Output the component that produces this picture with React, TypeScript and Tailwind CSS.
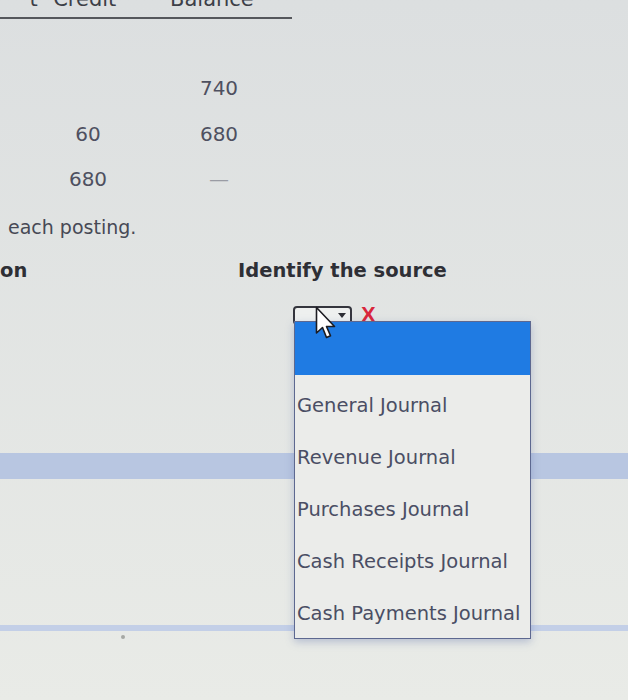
const options = [
  "General Journal",
  "Revenue Journal",
  "Purchases Journal",
  "Cash Receipts Journal",
  "Cash Payments Journal",
];

const rows = [
  { credit: "", balance: "740" },
  { credit: "60", balance: "680" },
  { credit: "680", balance: "—" },
];

export default function App() {
  return (
    <div
      className="relative w-[628px] h-[700px] overflow-hidden bg-gradient-to-b from-[#dcdfe0] to-[#e9ebe7] text-[#4e5060]"
      style={{ fontFamily: '"DejaVu Sans", Verdana, sans-serif' }}
    >
      {/* Ledger header, cut off by the top edge */}
      <div className="relative w-[292px] h-[19px] border-b-2 border-[#55575c]">
        <div className="absolute -top-[16px] left-0 right-0 flex text-[21px] text-[#3d3f48]">
          <span className="w-[40px] text-right">t</span>
          <span className="w-[100px] text-center">Credit</span>
          <span className="w-[170px] text-center">Balance</span>
        </div>
      </div>

      {/* Ledger rows */}
      <div className="mt-[57px] flex flex-col gap-[21.5px] text-[20px] leading-[24px]">
        {rows.map((r, i) => (
          <div key={i} className="flex">
            <span className="w-[176px] text-center">{r.credit}</span>
            <span
              className={`w-[86px] text-center ${r.balance === "—" ? "text-[#9a9ca4]" : ""}`}
            >
              {r.balance}
            </span>
          </div>
        ))}
      </div>

      <p className="mt-[24px] pl-[8px] text-[19px] leading-[24px] text-[#474955]">each posting.</p>

      {/* Column headings */}
      <div className="mt-[20px] flex text-[19.5px] leading-[24px] font-bold text-[#2e2f35]">
        <span className="w-[238px]">on</span>
        <span>Identify the source</span>
      </div>

      {/* Select + error mark */}
      <div className="relative mt-[23px] ml-[293px] flex items-start gap-[9px]">
        <div className="relative w-[59px] h-[19px] rounded-[4px] border-2 border-[#34353d] bg-[#eef0ef]">
          <span className="absolute right-[4px] top-[5px] w-0 h-0 border-l-[4px] border-r-[4px] border-t-[5px] border-l-transparent border-r-transparent border-t-[#2d2e35]" />
        </div>
        <span
          className="-mt-[2px] text-[22px] leading-[22px] font-bold text-[#d9263b]"
          style={{ fontFamily: '"Liberation Sans", Arial, sans-serif' }}
        >
          X
        </span>
      </div>

      {/* Blue bands of the table behind */}
      <div className="mt-[127px] h-[26px] bg-[#b8c6e1]" />
      <div className="mt-[146px] h-[6px] bg-[#c3cfe7]" />
      <div className="ml-[121px] mt-[4px] w-[4px] h-[4px] rounded-full bg-[#a6a8a4]" />

      {/* Open dropdown list */}
      <div className="absolute left-[294px] top-[321px] w-[237px] pb-[3px] border-[1.5px] border-[#5d6890] bg-[#ebecea] shadow-[0_3px_8px_rgba(90,110,170,0.35)]">
        <div className="h-[53px] bg-[#1f7be3]" />
        {options.map((o) => (
          <div
            key={o}
            className="h-[52px] flex items-end pb-[10px] pl-[2px] text-[19.5px] leading-[22px] text-[#4a4e64] whitespace-nowrap"
          >
            {o}
          </div>
        ))}
      </div>

      {/* Mouse pointer */}
      <svg
        className="absolute left-[315px] top-[306px]"
        width="24"
        height="35"
        viewBox="0 0 24 35"
      >
        <path
          d="M1.5 1.5 L1.5 27 L7.5 21.5 L11.5 31.5 L15.5 29.8 L11.5 20.5 L19.5 20.5 Z"
          fill="#ffffff"
          stroke="#1c1c22"
          strokeWidth="1.6"
          strokeLinejoin="round"
        />
      </svg>
    </div>
  );
}
